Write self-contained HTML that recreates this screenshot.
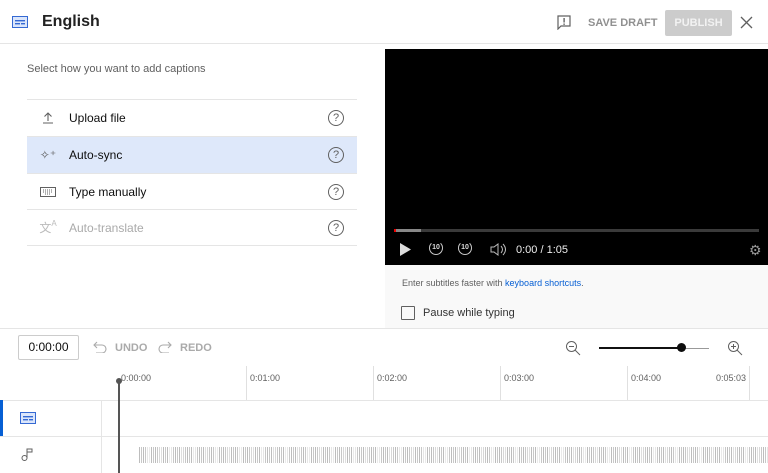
<!DOCTYPE html>
<html><head><meta charset="utf-8"><style>
*{box-sizing:border-box;margin:0;padding:0}
body{width:768px;height:473px;overflow:hidden;background:#fff;font-family:"Liberation Sans",Arial,sans-serif;color:#0d0d0d;position:relative}
.abs{position:absolute}
.hdr{left:0;top:0;width:768px;height:44px;border-bottom:1px solid #e5e5e5}
.row{position:absolute;left:27px;width:330px;height:37px;border-top:1px solid #e5e5e5;font-size:12px;display:flex;align-items:center}
.row .ic{width:42px;display:flex;justify-content:center}
.row .q{position:absolute;right:13px;top:10px;width:16px;height:16px;border:1.3px solid #606060;border-radius:50%;font-size:11px;text-align:center;line-height:14px;color:#606060}
.tick{position:absolute;top:366px;height:34px;border-left:1px solid #e0e0e0;font-size:9px;color:#606060;padding:7px 0 0 3px}
</style></head><body>
<div class="abs hdr"></div>
<svg class="abs" style="left:12px;top:16px" width="16" height="12"><rect x="0.5" y="0.5" width="15" height="11" fill="#dbe6fb" stroke="#3569d3"/><rect x="3" y="4" width="10" height="1.4" fill="#3569d3"/><rect x="3" y="7" width="5" height="1.4" fill="#3569d3"/><rect x="9" y="7" width="4" height="1.4" fill="#3569d3"/></svg>
<div class="abs" style="left:42px;top:13px;font-size:16px;font-weight:bold;color:#222">English</div>
<svg class="abs" style="left:557px;top:15px" width="14" height="15"><path d="M1 1h12v10H4l-3 3z" fill="none" stroke="#606060" stroke-width="1.2"/><rect x="6.4" y="3" width="1.4" height="4.5" fill="#606060"/><rect x="6.4" y="8.5" width="1.4" height="1.4" fill="#606060"/></svg>
<div class="abs" style="left:588px;top:17px;font-size:11px;font-weight:bold;color:#909090">SAVE DRAFT</div>
<div class="abs" style="left:665px;top:10px;width:67px;height:26px;background:#ccc;border-radius:2px;color:#f2f2f2;font-size:11px;font-weight:bold;text-align:center;line-height:26px">PUBLISH</div>
<svg class="abs" style="left:740px;top:16px" width="13" height="13"><path d="M1 1l11 11M12 1L1 12" stroke="#606060" stroke-width="1.3"/></svg>

<div class="abs" style="left:27px;top:63px;font-size:11px;color:#606060">Select how you want to add captions</div>
<div class="row" style="top:99px"><span class="ic"><svg width="12" height="12"><path d="M6 1v8M2.5 4.5L6 1l3.5 3.5M1 11h10" fill="none" stroke="#606060" stroke-width="1.1"/></svg></span>Upload file<span class="q">?</span></div>
<div class="row" style="top:136px;background:#dee8fa"><span class="ic" style="color:#606060;font-size:12px">✧⁺</span>Auto-sync<span class="q">?</span></div>
<div class="row" style="top:173px"><span class="ic"><svg width="16" height="10"><rect x=".5" y=".5" width="15" height="9" fill="none" stroke="#606060"/><path d="M3 3h10M3 5h10M5 7h6" stroke="#606060" stroke-dasharray="1 1"/></svg></span>Type manually<span class="q">?</span></div>
<div class="row" style="top:209px;color:#aaa;border-bottom:1px solid #e5e5e5"><span class="ic" style="font-size:12px;color:#bbb">文<sub style="font-size:8px">A</sub></span>Auto-translate<span class="q">?</span></div>

<div class="abs" style="left:385px;top:49px;width:383px;height:216px;background:#000"></div>
<div class="abs" style="left:394px;top:229px;width:365px;height:3px;background:#3a3a3a"></div>
<div class="abs" style="left:394px;top:229px;width:27px;height:3px;background:#888"></div>
<div class="abs" style="left:394px;top:229px;width:2px;height:3px;background:#e00"></div>
<svg class="abs" style="left:400px;top:243px" width="11" height="13"><path d="M0 0l11 6.5L0 13z" fill="#ddd"/></svg>
<div class="abs" style="left:429px;top:241px;width:14px;height:14px;border:1.5px solid #ccc;border-radius:50%;border-top-color:transparent;font-size:7px;color:#ddd;text-align:center;line-height:11px;font-weight:bold">10</div>
<div class="abs" style="left:458px;top:241px;width:14px;height:14px;border:1.5px solid #ccc;border-radius:50%;border-top-color:transparent;font-size:7px;color:#ddd;text-align:center;line-height:11px;font-weight:bold">10</div>
<svg class="abs" style="left:490px;top:243px" width="16" height="13"><path d="M1 4h3l4-3v11l-4-3H1z" fill="none" stroke="#bbb"/><path d="M11 3q3 3.5 0 7M13 1q5 5.5 0 11" fill="none" stroke="#bbb"/></svg>
<div class="abs" style="left:516px;top:244px;font-size:11px;color:#eee">0:00 / 1:05</div>
<div class="abs" style="left:749px;top:242px;font-size:14px;color:#999">⚙</div>
<div class="abs" style="left:385px;top:265px;width:383px;height:63px;background:#f9f9f9"></div>
<div class="abs" style="left:402px;top:278px;font-size:9px;color:#606060">Enter subtitles faster with <span style="color:#065fd4">keyboard shortcuts</span>.</div>
<div class="abs" style="left:401px;top:306px;width:14px;height:14px;border:1.5px solid #606060;border-radius:1px"></div>
<div class="abs" style="left:423px;top:307px;font-size:11px;color:#333">Pause while typing</div>
<div class="abs" style="left:0;top:328px;width:768px;border-top:1px solid #e5e5e5"></div>

<div class="abs" style="left:18px;top:335px;width:61px;height:25px;border:1px solid #ccc;border-radius:2px;font-size:12px;text-align:center;line-height:23px">0:00:00</div>
<svg class="abs" style="left:93px;top:341px" width="14" height="12"><path d="M4 1L1 4l3 3M1 4h8a4 4 0 0 1 0 8H3" fill="none" stroke="#aaa" stroke-width="1.1"/></svg>
<div class="abs" style="left:115px;top:342px;font-size:11px;color:#aaa;font-weight:bold">UNDO</div>
<svg class="abs" style="left:158px;top:341px" width="14" height="12"><path d="M10 1l3 3-3 3M13 4H5a4 4 0 0 0 0 8h6" fill="none" stroke="#aaa" stroke-width="1.1"/></svg>
<div class="abs" style="left:180px;top:342px;font-size:11px;color:#aaa;font-weight:bold">REDO</div>
<svg class="abs" style="left:565px;top:340px" width="16" height="16"><circle cx="6.5" cy="6.5" r="5" fill="none" stroke="#606060"/><path d="M4 6.5h5M10 10l5 5" stroke="#606060"/></svg>
<div class="abs" style="left:599px;top:347px;width:82px;height:1.5px;background:#111"></div>
<div class="abs" style="left:681px;top:347.5px;width:28px;height:1px;background:#999"></div>
<div class="abs" style="left:677px;top:343px;width:9px;height:9px;border-radius:50%;background:#0d0d0d"></div>
<svg class="abs" style="left:727px;top:340px" width="16" height="16"><circle cx="6.5" cy="6.5" r="5" fill="none" stroke="#606060"/><path d="M4 6.5h5M6.5 4v5M10 10l5 5" stroke="#606060"/></svg>

<div class="tick" style="left:118px;border-left:none">0:00:00</div>
<div class="tick" style="left:246px">0:01:00</div>
<div class="tick" style="left:373px">0:02:00</div>
<div class="tick" style="left:500px">0:03:00</div>
<div class="tick" style="left:627px">0:04:00</div>
<div class="tick" style="left:713px;border-left:none;border-right:1px solid #e0e0e0;padding-right:3px">0:05:03</div>
<div class="abs" style="left:0;top:400px;width:768px;border-top:1px solid #e5e5e5"></div>
<div class="abs" style="left:0;top:436px;width:768px;border-top:1px solid #e5e5e5"></div>
<div class="abs" style="left:101px;top:400px;height:73px;border-left:1px solid #e5e5e5"></div>
<div class="abs" style="left:0;top:400px;width:3px;height:36px;background:#065fd4"></div>
<svg class="abs" style="left:20px;top:412px" width="16" height="12"><rect x="0.5" y="0.5" width="15" height="11" fill="#dbe6fb" stroke="#3569d3"/><rect x="3" y="4" width="10" height="1.4" fill="#3569d3"/><rect x="3" y="7" width="5" height="1.4" fill="#3569d3"/><rect x="9" y="7" width="4" height="1.4" fill="#3569d3"/></svg>
<svg class="abs" style="left:21px;top:448px" width="12" height="14"><circle cx="3.5" cy="10" r="2.5" fill="none" stroke="#606060"/><path d="M6 10V1h5v3H6" fill="none" stroke="#606060"/></svg>
<div class="abs" style="left:139px;top:447px;width:629px;height:16px;background:repeating-linear-gradient(90deg,#bdbdbd 0 1px,transparent 1px 2px,#c8c8c8 2px 3px,transparent 3px 4px);-webkit-mask:repeating-linear-gradient(90deg,#000 0 7px,rgba(0,0,0,.4) 7px 11px,#000 11px 19px,rgba(0,0,0,.6) 19px 23px)"></div>
<div class="abs" style="left:118px;top:380px;width:1.5px;height:93px;background:#555"></div>
<div class="abs" style="left:116px;top:378px;width:6px;height:6px;border-radius:50%;background:#555"></div>
</body></html>
